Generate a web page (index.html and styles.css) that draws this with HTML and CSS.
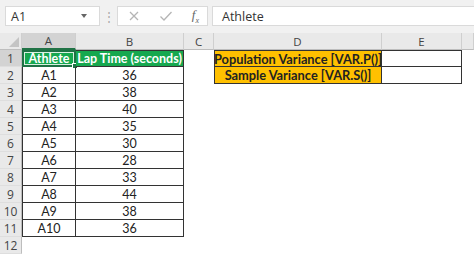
FILE: index.html
```html
<!DOCTYPE html>
<html lang="en">
<head>
    <meta charset="UTF-8">
    <title>Variance</title>
    <link rel="stylesheet" href="styles.css">
</head>
<body>

    <header class="formula-bar">
        <div class="name-box">
            <span>A1</span>
            <span class="caret"></span>
        </div>
        <div class="grip">&#8942;</div>
        <div class="fx-box">
            <svg width="12" height="12" viewBox="0 0 12 12"><path d="M2 2 L10 10 M10 2 L2 10" stroke="#b5b5b5" stroke-width="1.3" fill="none"/></svg>
            <svg width="14" height="12" viewBox="0 0 14 12"><path d="M1.5 6.5 L5 10 L12.5 2" stroke="#b5b5b5" stroke-width="1.3" fill="none"/></svg>
            <span class="fx">f<sub>x</sub></span>
        </div>
        <div class="content-box">Athlete</div>
    </header>

    <main class="sheet">
        <div class="corner"><span class="tri"></span></div>
        <div class="col-head active">A</div>
        <div class="col-head">B</div>
        <div class="col-head">C</div>
        <div class="col-head">D</div>
        <div class="col-head">E</div>
        <div class="col-head"></div>

        <div class="row-head active">1</div>
        <div class="cell green sel">Athlete<span class="handle"></span></div>
        <div class="cell green top">Lap Time (seconds)</div>
        <div class="cell"></div>
        <div class="cell orange top left">Population Variance [VAR.P()]</div>
        <div class="cell box top"></div>
        <div class="cell"></div>

        <div class="row-head">2</div>
        <div class="cell box left">A1</div>
        <div class="cell box">36</div>
        <div class="cell"></div>
        <div class="cell orange left">Sample Variance [VAR.S()]</div>
        <div class="cell box"></div>
        <div class="cell"></div>

        <div class="row-head">3</div>
        <div class="cell box left">A2</div>
        <div class="cell box">38</div>
        <div class="cell"></div><div class="cell"></div><div class="cell"></div><div class="cell"></div>

        <div class="row-head">4</div>
        <div class="cell box left">A3</div>
        <div class="cell box">40</div>
        <div class="cell"></div><div class="cell"></div><div class="cell"></div><div class="cell"></div>

        <div class="row-head">5</div>
        <div class="cell box left">A4</div>
        <div class="cell box">35</div>
        <div class="cell"></div><div class="cell"></div><div class="cell"></div><div class="cell"></div>

        <div class="row-head">6</div>
        <div class="cell box left">A5</div>
        <div class="cell box">30</div>
        <div class="cell"></div><div class="cell"></div><div class="cell"></div><div class="cell"></div>

        <div class="row-head">7</div>
        <div class="cell box left">A6</div>
        <div class="cell box">28</div>
        <div class="cell"></div><div class="cell"></div><div class="cell"></div><div class="cell"></div>

        <div class="row-head">8</div>
        <div class="cell box left">A7</div>
        <div class="cell box">33</div>
        <div class="cell"></div><div class="cell"></div><div class="cell"></div><div class="cell"></div>

        <div class="row-head">9</div>
        <div class="cell box left">A8</div>
        <div class="cell box">44</div>
        <div class="cell"></div><div class="cell"></div><div class="cell"></div><div class="cell"></div>

        <div class="row-head">10</div>
        <div class="cell box left">A9</div>
        <div class="cell box">38</div>
        <div class="cell"></div><div class="cell"></div><div class="cell"></div><div class="cell"></div>

        <div class="row-head">11</div>
        <div class="cell box left">A10</div>
        <div class="cell box">36</div>
        <div class="cell"></div><div class="cell"></div><div class="cell"></div><div class="cell"></div>

        <div class="row-head">12</div>
        <div class="cell"></div><div class="cell"></div><div class="cell"></div><div class="cell"></div><div class="cell"></div><div class="cell"></div>
    </main>

</body>
</html>
```

FILE: styles.css
```css
* {
    box-sizing: border-box;
}

body {
    margin: 0;
    font-family: 'Lato', 'Open Sans', sans-serif;
    background-color: white;
    color: #222;
    height: 257px;
    overflow: hidden;
}

.formula-bar {
    display: flex;
    align-items: center;
    height: 33px;
    padding: 4px 0 5px 5px;
    background-color: #f1f1f1;
}

.name-box, .fx-box, .content-box {
    height: 20px;
    background-color: white;
    border: 1px solid #dadada;
    display: flex;
    align-items: center;
}

.name-box {
    width: 95px;
    padding: 0 8px 0 5px;
    justify-content: space-between;
    font-size: 12.5px;
    color: #333;
    font-family: 'Open Sans', sans-serif;
}

.caret {
    width: 0;
    height: 0;
    border-left: 3.5px solid transparent;
    border-right: 3.5px solid transparent;
    border-top: 4px solid #666;
    margin-right: 4px;
}

.grip {
    width: 17px;
    text-align: center;
    color: #aaa;
    font-size: 12px;
}

.fx-box {
    width: 91px;
    padding: 0 8px 0 10px;
    justify-content: space-between;
}

.fx {
    font-family: 'Liberation Serif', serif;
    font-style: italic;
    font-size: 13px;
    color: #666;
}

.fx sub {
    font-size: 8px;
}

.content-box {
    flex: 1;
    margin-left: 4px;
    border-right: none;
    padding-left: 9px;
    font-size: 12.5px;
    color: #333;
    font-family: 'Open Sans', sans-serif;
}

.sheet {
    display: grid;
    grid-template-columns: 22px 54px 108px 30px 168px 80px 1fr;
    grid-auto-rows: 17px;
}

.corner {
    background-color: #e9e9e9;
    border-right: 1px solid #cfcfcf;
    border-bottom: 1px solid #bdbdbd;
    position: relative;
}

.tri {
    position: absolute;
    right: 2px;
    bottom: 2px;
    width: 0;
    height: 0;
    border-left: 10px solid transparent;
    border-bottom: 10px solid #c4c4c4;
}

.col-head {
    background-color: #e9e9e9;
    border-right: 1px solid #cfcfcf;
    border-bottom: 1px solid #bdbdbd;
    display: flex;
    align-items: center;
    justify-content: center;
    font-family: 'Open Sans', sans-serif;
    font-size: 11.5px;
    color: #444;
}

.col-head.active {
    background-color: #d3d3d3;
    border-bottom: 2px solid #217346;
}

.row-head {
    background-color: #e9e9e9;
    border-right: 1px solid #bdbdbd;
    border-bottom: 1px solid #dedede;
    display: flex;
    align-items: center;
    justify-content: center;
    font-family: 'Open Sans', sans-serif;
    font-size: 12px;
    color: #444;
}

.row-head.active {
    background-color: #d3d3d3;
}

.cell {
    display: flex;
    align-items: center;
    justify-content: center;
    font-size: 12.5px;
    white-space: nowrap;
    position: relative;
}

.box {
    border-right: 1px solid #333;
    border-bottom: 1px solid #333;
}

.left {
    border-left: 1px solid #333;
}

.top {
    border-top: 1px solid #333;
}

.green {
    background-color: #16a84f;
    color: white;
    font-weight: 700;
    border-right: 1px solid #333;
    border-bottom: 1px solid #333;
}

.orange {
    background-color: #ffc000;
    color: #222;
    font-weight: 700;
    font-size: 12.8px;
    border-right: 1px solid #333;
    border-bottom: 1px solid #333;
}

.sel {
    border: 2px solid #1e7145;
    box-shadow: inset 0 0 0 1px #d8efe0;
}

.handle {
    position: absolute;
    right: -4px;
    bottom: -4px;
    width: 6px;
    height: 6px;
    background-color: #1e7145;
    border: 1px solid white;
}
```
